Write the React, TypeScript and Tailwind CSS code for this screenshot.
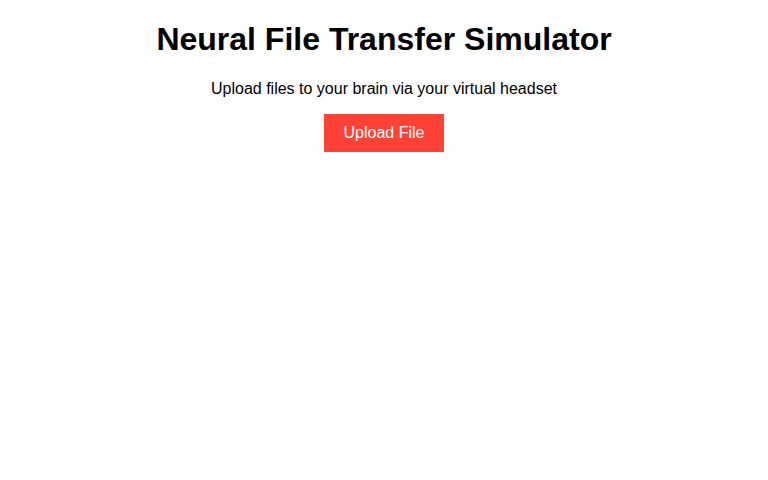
import React from "react";

const App = () => {
  return (
    <div className="min-h-screen bg-white text-center text-black font-['Liberation_Sans',Arial,sans-serif]">
      <h1 className="pt-[21px] text-[32px] leading-[37px] font-bold">
        Neural File Transfer Simulator
      </h1>
      <p className="mt-[22px] text-base leading-[18px]">
        Upload files to your brain via your virtual headset
      </p>
      <button className="mt-4 bg-[#ff4136] px-5 py-[10px] text-base leading-[18px] text-white">
        Upload File
      </button>
    </div>
  );
};

export default App;
